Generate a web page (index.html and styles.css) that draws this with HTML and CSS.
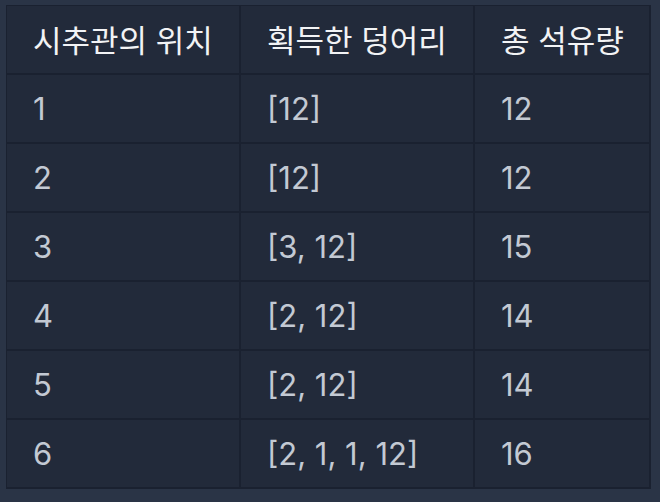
FILE: index.html
```html
<!DOCTYPE html>
<html lang="ko">
<head>
<meta charset="utf-8">
<link rel="stylesheet" href="styles.css">
</head>
<body>
<div class="wrap">
<table class="grid">
<thead>
<tr><th>시추관의 위치</th><th>획득한 덩어리</th><th>총 석유량</th></tr>
</thead>
<tbody>
<tr><td>1</td><td>[12]</td><td>12</td></tr>
<tr><td>2</td><td>[12]</td><td>12</td></tr>
<tr><td>3</td><td>[3, 12]</td><td>15</td></tr>
<tr><td>4</td><td>[2, 12]</td><td>14</td></tr>
<tr><td>5</td><td>[2, 12]</td><td>14</td></tr>
<tr><td>6</td><td>[2, 1, 1, 12]</td><td>16</td></tr>
</tbody>
</table>
</div>
</body>
</html>
```
FILE: styles.css
```css
html, body {
  margin: 0;
  padding: 0;
  background: #2a3446;
  width: 660px;
  height: 502px;
  overflow: hidden;
}
.wrap {
  padding: 5px 9px 0 6px;
}
.grid {
  border-collapse: separate;
  border-spacing: 0;
  width: 645px;
  background: #222a3a;
  border-top: 1px solid #1a2130;
  border-left: 1px solid #1a2130;
  font-family: Inter, "Noto Sans CJK KR", sans-serif;
  font-size: 31px;
}
.grid th, .grid td {
  border-right: 2px solid #1a2130;
  border-bottom: 2px solid #1a2130;
  text-align: left;
  padding: 0 0 0 26px;
  box-sizing: border-box;
}
.grid th {
  height: 69px;
  font-weight: 400;
  color: #f2f3f5;
  font-family: "Noto Sans CJK KR", sans-serif;
  font-size: 31px;
  padding-bottom: 3px;
}
.grid td {
  color: #c3c9d3;
  height: 69px;
}
.grid th:nth-child(1), .grid td:nth-child(1) { width: 234px; }
.grid th:nth-child(2), .grid td:nth-child(2) { width: 234px; }
```
